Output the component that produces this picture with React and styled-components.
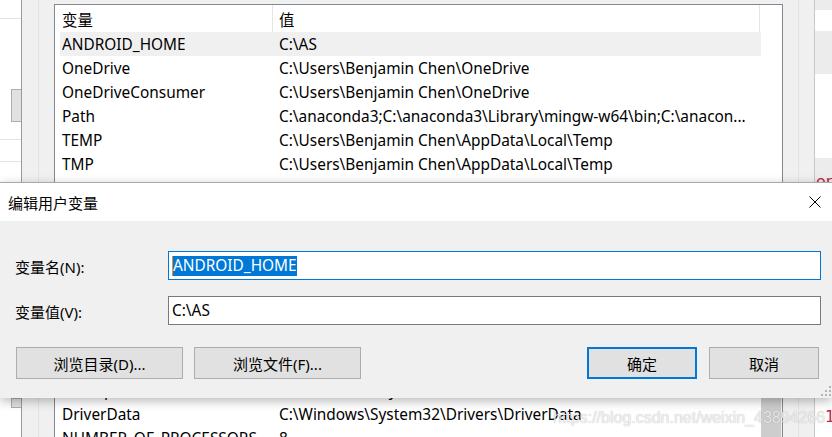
import React from "react";
import styled, { createGlobalStyle } from "styled-components";

const Global = createGlobalStyle`
  html, body { margin: 0; padding: 0; background: #f0f0f0; }
  body { width: 832px; height: 437px; overflow: hidden; }
  * { box-sizing: border-box; }
`;

const FONT = `"Noto Sans", "Noto Sans CJK SC", sans-serif`;

const Screen = styled.div`
  position: relative;
  width: 832px;
  height: 437px;
  overflow: hidden;
  font-family: ${FONT};
  font-size: 15.4px;
  color: #000;
  display: flex;
  background: #f0f0f0;
`;

/* ---------- window behind (System Properties) ---------- */
const BackPane = styled.div`
  width: 21px;
  flex: none;
  background: #fff;
  display: flex;
  flex-direction: column;
`;

const BackLine = styled.div`
  height: ${(p) => p.$h}px;
  border-bottom: ${(p) => (p.$line ? "1px solid #e3e3e3" : "none")};
  flex: none;
`;

const BackBlock = styled.div`
  margin-left: 11px;
  width: 10px;
  height: ${(p) => p.$h}px;
  background: #e1e1e1;
  border: 1px solid #adadad;
  border-right: none;
  flex: none;
`;

/* ---------- Environment variables window ---------- */
const EnvWindow = styled.div`
  flex: 1;
  display: flex;
  border-left: 1px solid #9a9a9a;
  background: #f0f0f0;
`;

const Gutter = styled.div`
  width: ${(p) => p.$w}px;
  flex: none;
  display: flex;
`;

const GutterHalf = styled.div`
  flex: 1;
  & + & { border-left: 1px solid #e2e2e2; }
`;

const ListColumn = styled.div`
  width: 729px;
  flex: none;
  display: flex;
  flex-direction: column;
  padding-top: 4px;
`;

const ListBox = styled.div`
  border: 1px solid #828790;
  background: #fff;
  height: ${(p) => p.$h}px;
  margin-top: ${(p) => p.$mt || 0}px;
  display: flex;
  overflow: hidden;
  flex: none;
`;

const ListInner = styled.div`
  flex: 1;
  display: flex;
  flex-direction: column;
`;

const Header = styled.div`
  display: grid;
  grid-template-columns: 218px 487px;
  height: 27px;
  flex: none;
`;

const HeadCell = styled.div`
  padding-left: ${(p) => p.$pl}px;
  border-right: 1px solid #e5e5e5;
  display: flex;
  align-items: center;
  padding-top: 2px;
  white-space: nowrap;
`;

const Row = styled.div`
  display: grid;
  grid-template-columns: 217px 1fr;
  height: 24px;
  flex: none;
  align-items: center;
  margin: 0 ${(p) => p.$mr}px 0 5px;
  padding-left: 2px;
  background: ${(p) => (p.$sel ? "#f0f0f0" : "transparent")};
  white-space: nowrap;
`;

const Cell = styled.span`
  overflow: hidden;
`;

const ScrollTrack = styled.div`
  width: 21px;
  flex: none;
  display: flex;
  flex-direction: column;
  justify-content: flex-end;
  background: #f0f0f0;
`;

const ScrollThumb = styled.div`
  height: 70px;
  margin: 0 1px 0 0;
  background: #cdcdcd;
`;

const RightPane = styled.div`
  flex: 1;
  display: flex;
  flex-direction: column;
  background: #fff;
  box-shadow: inset 7px 0 6px -5px rgba(0, 0, 0, 0.25);
  border-left: 1px solid #c8c8c8;
`;

const Band = styled.div`
  height: ${(p) => p.$h}px;
  flex: none;
  background: ${(p) => (p.$grey ? "#ececec" : "#fff")};
  position: relative;
  overflow: hidden;
  display: flex;
  align-items: flex-end;
  padding-left: ${(p) => p.$pl || 0}px;
`;

const RedText = styled.span`
  font-family: "DejaVu Sans", "Liberation Sans", sans-serif;
  color: #c0284a;
  font-size: 16px;
  line-height: 1;
  transform: translateY(${(p) => p.$dy}px);
`;

/* ---------- Dialog ---------- */
const Dialog = styled.div`
  position: absolute;
  left: 0;
  top: 182px;
  width: 832px;
  height: 216px;
  display: flex;
  flex-direction: column;
  border-top: 1px solid #a9a9a9;
  box-shadow: 0 3px 10px rgba(0, 0, 0, 0.28);
  background: #f0f0f0;
`;

const TitleBar = styled.div`
  height: 38px;
  flex: none;
  background: #fff;
  display: flex;
  align-items: center;
  justify-content: space-between;
  padding: 0 11px 0 8px;
`;

const Title = styled.span`
  font-size: 15px;
`;

const CloseBtn = styled.div`
  width: 12px;
  height: 12px;
  display: flex;
`;

const Body = styled.div`
  position: relative;
  flex: 1;
  padding: 30px 13px 0 15px;
  display: flex;
  flex-direction: column;
`;

const FormGrid = styled.div`
  display: grid;
  grid-template-columns: 153px 653px;
  row-gap: 16px;
  align-items: center;
`;

const Label = styled.label`
  font-size: 15px;
  padding-top: 1px;
`;

const Input = styled.div`
  height: 29px;
  border: 1px solid ${(p) => (p.$focus ? "#0078d7" : "#7a7a7a")};
  background: #fff;
  display: flex;
  align-items: center;
  padding-left: 3px;
  white-space: nowrap;
`;

const Caret = styled.span`
  width: 1px;
  height: 20px;
  background: #f08a24;
  flex: none;
`;

const Selected = styled.span`
  background: #0078d7;
  color: #fff;
  line-height: 20px;
  height: 20px;
  display: inline-block;
`;

const ButtonRow = styled.div`
  margin-top: 22px;
  margin-left: 1px;
  display: flex;
  align-items: center;
`;

const Button = styled.div`
  width: ${(p) => p.$w}px;
  height: 32px;
  background: #e1e1e1;
  border: ${(p) => (p.$primary ? "2px solid #0078d7" : "1px solid #adadad")};
  display: flex;
  align-items: center;
  justify-content: center;
  font-size: 15px;
  margin-left: ${(p) => p.$ml || 0}px;
  flex: none;
`;

const Spacer = styled.div`
  flex: 1;
`;

const Grip = styled.svg`
  position: absolute;
  right: 0;
  bottom: 1px;
`;

const Watermark = styled.div`
  position: absolute;
  left: 553px;
  top: 408px;
  font-family: "Liberation Sans", Arial, sans-serif;
  font-size: 16px;
  line-height: 20px;
  color: rgba(255, 255, 255, 0.8);
  text-shadow: 0 0 1px rgba(0, 0, 0, 0.35);
  white-space: nowrap;
  pointer-events: none;
`;

const userVars = [
  ["ANDROID_HOME", "C:\\AS", true],
  ["OneDrive", "C:\\Users\\Benjamin Chen\\OneDrive"],
  ["OneDriveConsumer", "C:\\Users\\Benjamin Chen\\OneDrive"],
  ["Path", "C:\\anaconda3;C:\\anaconda3\\Library\\mingw-w64\\bin;C:\\anacon..."],
  ["TEMP", "C:\\Users\\Benjamin Chen\\AppData\\Local\\Temp"],
  ["TMP", "C:\\Users\\Benjamin Chen\\AppData\\Local\\Temp"],
];

const sysVars = [
  ["asl.log", "Destination=file"],
  ["ComSpec", "C:\\WINDOWS\\system32\\cmd.exe"],
  ["DriverData", "C:\\Windows\\System32\\Drivers\\DriverData"],
  ["NUMBER_OF_PROCESSORS", "8"],
];

export default function App() {
  return (
    <>
      <Global />
      <Screen>
        <BackPane>
          <BackLine $h={19} $line />
          <BackLine $h={70} />
          <BackBlock $h={33} />
          <BackLine $h={18} $line />
          <BackLine $h={22} $line />
          <BackLine $h={236} />
          <BackBlock $h={10} />
        </BackPane>
        <EnvWindow>
          <Gutter $w={32}>
            <GutterHalf />
            <GutterHalf />
          </Gutter>
          <ListColumn>
            <ListBox $h={206}>
              <ListInner>
                <Header>
                  <HeadCell $pl={7}>变量</HeadCell>
                  <HeadCell $pl={6}>值</HeadCell>
                </Header>
                {userVars.map(([k, v, sel]) => (
                  <Row key={k} $sel={sel} $mr={21}>
                    <Cell>{k}</Cell>
                    <Cell>{v}</Cell>
                  </Row>
                ))}
              </ListInner>
            </ListBox>
            <ListBox $h={140} $mt={116}>
              <ListInner>
                <Header>
                  <HeadCell $pl={7}>变量</HeadCell>
                  <HeadCell $pl={6}>值</HeadCell>
                </Header>
                {sysVars.map(([k, v]) => (
                  <Row key={k} $mr={0}>
                    <Cell>{k}</Cell>
                    <Cell>{v}</Cell>
                  </Row>
                ))}
              </ListInner>
              <ScrollTrack>
                <ScrollThumb />
              </ScrollTrack>
            </ListBox>
          </ListColumn>
          <Gutter $w={31}>
            <GutterHalf />
            <GutterHalf />
          </Gutter>
          <RightPane>
            <Band $h={10} $grey />
            <Band $h={21} />
            <Band $h={43} $grey />
            <Band $h={84} />
            <Band $h={25} $grey $pl={1}>
              <RedText $dy={7}>on</RedText>
            </Band>
            <Band $h={215} />
            <Band $h={39} $pl={10}>
              <RedText $dy={-12}>1</RedText>
            </Band>
          </RightPane>
        </EnvWindow>

        <Watermark>https://blog.csdn.net/weixin_43894266</Watermark>

        <Dialog>
          <TitleBar>
            <Title>编辑用户变量</Title>
            <CloseBtn>
              <svg width="12" height="12" viewBox="0 0 12 12">
                <path d="M0.5 0.5 L11.5 11.5 M11.5 0.5 L0.5 11.5" stroke="#000" strokeWidth="1" fill="none" />
              </svg>
            </CloseBtn>
          </TitleBar>
          <Body>
            <FormGrid>
              <Label>变量名(N):</Label>
              <Input $focus>
                <Caret />
                <Selected>ANDROID_HOME</Selected>
              </Input>
              <Label>变量值(V):</Label>
              <Input>C:\AS</Input>
            </FormGrid>
            <ButtonRow>
              <Button $w={167}>浏览目录(D)...</Button>
              <Button $w={167} $ml={11}>浏览文件(F)...</Button>
              <Spacer />
              <Button $w={110} $primary>确定</Button>
              <Button $w={110} $ml={12}>取消</Button>
            </ButtonRow>
            <Grip width="11" height="11" viewBox="0 0 11 11">
              {[
                [8, 0], [8, 4], [4, 4], [8, 8], [4, 8], [0, 8],
              ].map(([x, y]) => (
                <rect key={`${x}-${y}`} x={x} y={y} width="2" height="2" fill="#b4b4b4" />
              ))}
            </Grip>
          </Body>
        </Dialog>
      </Screen>
    </>
  );
}
